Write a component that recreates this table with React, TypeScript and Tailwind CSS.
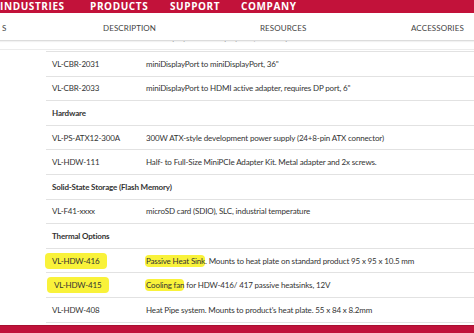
import type { ReactNode } from "react"

type Row =
    | { kind: "section"; title: string }
    | { kind: "item"; part: ReactNode; desc: ReactNode }

function Mark({ children, className = "" }: { children: ReactNode; className?: string }) {
    return <span className={`bg-[#f9f23a] rounded-[4px] ${className}`}>{children}</span>
}

const rows: Row[] = [
    { kind: "item", part: "VL-CBR-2031", desc: "miniDisplayPort to miniDisplayPort, 36\"" },
    { kind: "item", part: "VL-CBR-2033", desc: "miniDisplayPort to HDMI active adapter, requires DP port, 6\"" },
    { kind: "section", title: "Hardware" },
    { kind: "item", part: "VL-PS-ATX12-300A", desc: "300W ATX-style development power supply (24+8-pin ATX connector)" },
    { kind: "item", part: "VL-HDW-111", desc: "Half- to Full-Size MiniPCIe Adapter Kit. Metal adapter and 2x screws." },
    { kind: "section", title: "Solid-State Storage (Flash Memory)" },
    { kind: "item", part: "VL-F41-xxxx", desc: "microSD card (SDIO), SLC, industrial temperature" },
    { kind: "section", title: "Thermal Options" },
    {
        kind: "item",
        part: <Mark className="-ml-[7px] px-[7px] py-[3px]">VL-HDW-416</Mark>,
        desc: (
            <>
                <Mark className="-ml-[1px] pl-[1px] py-[1px]">Passive Heat Sink</Mark>. Mounts to heat plate on standard product 95 x 95 x 10.5 mm
            </>
        ),
    },
    {
        kind: "item",
        part: <Mark className="-ml-[5px] px-[7px] py-[3px]">VL-HDW-415</Mark>,
        desc: (
            <>
                <Mark className="-ml-[1px] pl-[1px] py-[1px]">Cooling fan</Mark> for HDW-416/ 417 passive heatsinks, 12V
            </>
        ),
    },
    { kind: "item", part: "VL-HDW-408", desc: "Heat Pipe system. Mounts to product's heat plate. 55 x 84 x 8.2mm" },
]

export default function App() {
    return (
        <div className="w-[474px] h-[333px] overflow-hidden bg-white flex flex-col font-['Lato','Open_Sans',sans-serif] text-[#333]">
            {/* top nav, cut off by the screenshot */}
            <div className="h-[13px] shrink-0 bg-[#c2123a] overflow-hidden flex items-start pt-[1px] text-white font-['Open_Sans',sans-serif] font-bold text-[10px] leading-[10px] tracking-[0.06em]">
                <span className="w-[90px]">INDUSTRIES</span>
                <span className="w-[80px]">PRODUCTS</span>
                <span className="w-[71px]">SUPPORT</span>
                <span>COMPANY</span>
            </div>

            {/* sticky column header */}
            <div className="h-[28px] shrink-0 flex items-center text-[8px] tracking-[0.1px] uppercase text-[#444] border-b border-[#dcdcdc] shadow-[0_1px_1px_rgba(0,0,0,0.05)] pt-[3px]">
                <span className="w-[103px] pl-[2px]">S</span>
                <span className="w-[157px]">Description</span>
                <span className="w-[151px]">Resources</span>
                <span>Accessories</span>
            </div>

            {/* row tails peeking below the header */}
            <div className="h-[9px] shrink-0 overflow-hidden relative border-b border-[#ececec]">
                <div className="absolute left-[146px] -top-[9px] text-[8px] text-[#999] whitespace-nowrap">
                    miniDisplayPort to DisplayPort, 36" Adapter
                </div>
            </div>

            <div className="pl-[46px] pt-[1px]">
                {rows.map((r, i) => (
                    <div key={i} className="h-[24.6px] flex items-center border-t border-[#e2e2e2] text-[8px] tracking-[-0.15px] whitespace-nowrap">
                        {r.kind === "section" ? (
                            <span className="pl-[6px] font-bold text-[#333]">{r.title}</span>
                        ) : (
                            <>
                                <span className="w-[100px] shrink-0 pl-[6px]">{r.part}</span>
                                <span>{r.desc}</span>
                            </>
                        )}
                    </div>
                ))}
                <div className="border-t border-[#e2e2e2]" />
            </div>

            <div className="flex-1" />
            <div className="h-[8px] shrink-0 bg-[#c0123a] border-t border-[#a80f30]" />
        </div>
    )
}
